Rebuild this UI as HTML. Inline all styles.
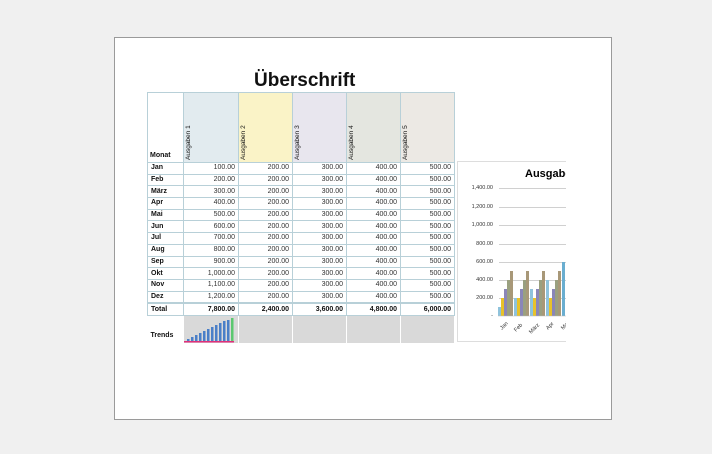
<!DOCTYPE html>
<html><head><meta charset="utf-8"><style>
body{margin:0;width:712px;height:454px;background:#f0f0f0;position:relative;overflow:hidden;font-family:"Liberation Sans",Arial,sans-serif}
.page{position:absolute;left:114px;top:37px;width:496px;height:381px;background:#fff;border:1px solid #9a9a9a}
h1{position:absolute;left:254px;top:70px;margin:0;font-size:19px;font-weight:bold;color:#111}
table{position:absolute;left:147px;top:92px;border-collapse:collapse;table-layout:fixed;font-size:7px}
td{border:1px solid #b8d0d8;height:10.7px;padding:0 3px;text-align:right;color:#333;line-height:10px}
td:first-child{text-align:left;font-weight:bold;color:#111}
tr.h td{height:68px;vertical-align:bottom;padding:0}
.v{writing-mode:vertical-rl;transform:rotate(180deg);font-size:6.5px;color:#111;padding:2px 0 2px 2px;text-align:left;height:64px}
tr.t td{font-weight:bold;color:#111;border-top:2px solid #b8d0d8}
tr.tr td{border:none;height:25px;background:#d9d9d9;border-right:1px solid #fff;padding:0;vertical-align:bottom;line-height:0}
tr.tr td:first-child{background:#fff;padding:0 0 2px 3px;line-height:10px}
.chart{position:absolute;left:457px;top:161px;width:108px;height:179px;border:1px solid #ddd;border-right:none;background:#fff;overflow:hidden}
.gl{position:absolute;left:41px;width:80px;height:1px;background:#d0d0d0}
.lb{position:absolute;left:0;width:35px;text-align:right;font-size:5.5px;color:#333}
</style></head><body>
<div class="page"></div>
<h1>Überschrift</h1>
<table>
<colgroup><col style="width:36px"><col style="width:54px"><col style="width:54px"><col style="width:54px"><col style="width:54px"><col style="width:54px"></colgroup>
<tr class="h"><td style="padding:0 0 1px 2px;font-size:7px">Monat</td><td style="background:#e2ebef"><div class="v">Ausgaben 1</div></td><td style="background:#faf3c7"><div class="v">Ausgaben 2</div></td><td style="background:#e8e6ee"><div class="v">Ausgaben 3</div></td><td style="background:#e4e6e0"><div class="v">Ausgaben 4</div></td><td style="background:#ece9e4"><div class="v">Ausgaben 5</div></td></tr>
<tr><td>Jan</td><td>100.00</td><td>200.00</td><td>300.00</td><td>400.00</td><td>500.00</td></tr>
<tr><td>Feb</td><td>200.00</td><td>200.00</td><td>300.00</td><td>400.00</td><td>500.00</td></tr>
<tr><td>März</td><td>300.00</td><td>200.00</td><td>300.00</td><td>400.00</td><td>500.00</td></tr>
<tr><td>Apr</td><td>400.00</td><td>200.00</td><td>300.00</td><td>400.00</td><td>500.00</td></tr>
<tr><td>Mai</td><td>500.00</td><td>200.00</td><td>300.00</td><td>400.00</td><td>500.00</td></tr>
<tr><td>Jun</td><td>600.00</td><td>200.00</td><td>300.00</td><td>400.00</td><td>500.00</td></tr>
<tr><td>Jul</td><td>700.00</td><td>200.00</td><td>300.00</td><td>400.00</td><td>500.00</td></tr>
<tr><td>Aug</td><td>800.00</td><td>200.00</td><td>300.00</td><td>400.00</td><td>500.00</td></tr>
<tr><td>Sep</td><td>900.00</td><td>200.00</td><td>300.00</td><td>400.00</td><td>500.00</td></tr>
<tr><td>Okt</td><td>1,000.00</td><td>200.00</td><td>300.00</td><td>400.00</td><td>500.00</td></tr>
<tr><td>Nov</td><td>1,100.00</td><td>200.00</td><td>300.00</td><td>400.00</td><td>500.00</td></tr>
<tr><td>Dez</td><td>1,200.00</td><td>200.00</td><td>300.00</td><td>400.00</td><td>500.00</td></tr>
<tr class="t"><td>Total</td><td>7,800.00</td><td>2,400.00</td><td>3,600.00</td><td>4,800.00</td><td>6,000.00</td></tr>
<tr class="tr"><td>Trends</td><td><svg width="54" height="25" style="display:block"><g fill="#4a7fc8"><rect x="3" y="21" width="2.5" height="3"/><rect x="7" y="19" width="2.5" height="5"/><rect x="11" y="17" width="2.5" height="7"/><rect x="15" y="15" width="2.5" height="9"/><rect x="19" y="13" width="2.5" height="11"/><rect x="23" y="11" width="2.5" height="13"/><rect x="27" y="9" width="2.5" height="15"/><rect x="31" y="7" width="2.5" height="17"/><rect x="35" y="5" width="2.5" height="19"/><rect x="39" y="3" width="2.5" height="21"/><rect x="43" y="2" width="2.5" height="22"/></g><rect x="47" y="0" width="2.5" height="24" fill="#5cc870"/><rect x="0" y="23" width="50" height="1.5" fill="#e0307a"/></svg></td><td></td><td></td><td></td><td></td></tr>
</table>
<div class="chart">
<div style="position:absolute;left:67px;top:6px;font-size:11px;font-weight:bold;white-space:nowrap">Ausgaben</div>
<div class="gl" style="top:26px"></div><div class="lb" style="top:23px">1,400.00</div>
<div class="gl" style="top:45px"></div><div class="lb" style="top:42px">1,200.00</div>
<div class="gl" style="top:63px"></div><div class="lb" style="top:60px">1,000.00</div>
<div class="gl" style="top:82px"></div><div class="lb" style="top:79px">800.00</div>
<div class="gl" style="top:100px"></div><div class="lb" style="top:97px">600.00</div>
<div class="gl" style="top:118px"></div><div class="lb" style="top:115px">400.00</div>
<div class="gl" style="top:136px"></div><div class="lb" style="top:133px">200.00</div>
<div class="lb" style="top:151px">-</div>
<svg style="position:absolute;left:0;top:0" width="108" height="179">
<g>
<rect x="40" y="145" width="3" height="9" fill="#8fc3dc"/><rect x="43" y="136" width="3" height="18" fill="#e8c22a"/><rect x="46" y="127" width="3" height="27" fill="#8a86b8"/><rect x="49" y="118" width="3" height="36" fill="#9aa080"/><rect x="52" y="109" width="3" height="45" fill="#a89878"/>
<rect x="56" y="136" width="3" height="18" fill="#8fc3dc"/><rect x="59" y="136" width="3" height="18" fill="#e8c22a"/><rect x="62" y="127" width="3" height="27" fill="#8a86b8"/><rect x="65" y="118" width="3" height="36" fill="#9aa080"/><rect x="68" y="109" width="3" height="45" fill="#a89878"/>
<rect x="72" y="127" width="3" height="27" fill="#8fc3dc"/><rect x="75" y="136" width="3" height="18" fill="#e8c22a"/><rect x="78" y="127" width="3" height="27" fill="#8a86b8"/><rect x="81" y="118" width="3" height="36" fill="#9aa080"/><rect x="84" y="109" width="3" height="45" fill="#a89878"/>
<rect x="88" y="118" width="3" height="36" fill="#8fc3dc"/><rect x="91" y="136" width="3" height="18" fill="#e8c22a"/><rect x="94" y="127" width="3" height="27" fill="#8a86b8"/><rect x="97" y="118" width="3" height="36" fill="#9aa080"/><rect x="100" y="109" width="3" height="45" fill="#a89878"/>
<rect x="104" y="100" width="3" height="54" fill="#6aaed0"/>
</g>
<line x1="40" y1="154" x2="108" y2="154" stroke="#bbb" stroke-width="0.5"/>
<g font-size="5.5" fill="#333" font-family="Liberation Sans,sans-serif">
<text transform="translate(44,168) rotate(-45)">Jan</text><text transform="translate(58,170) rotate(-45)">Feb</text><text transform="translate(73,172) rotate(-45)">März</text><text transform="translate(90,168) rotate(-45)">Apr</text><text transform="translate(105,168) rotate(-45)">Mai</text>
</g>
</svg>
</div>
</body></html>
